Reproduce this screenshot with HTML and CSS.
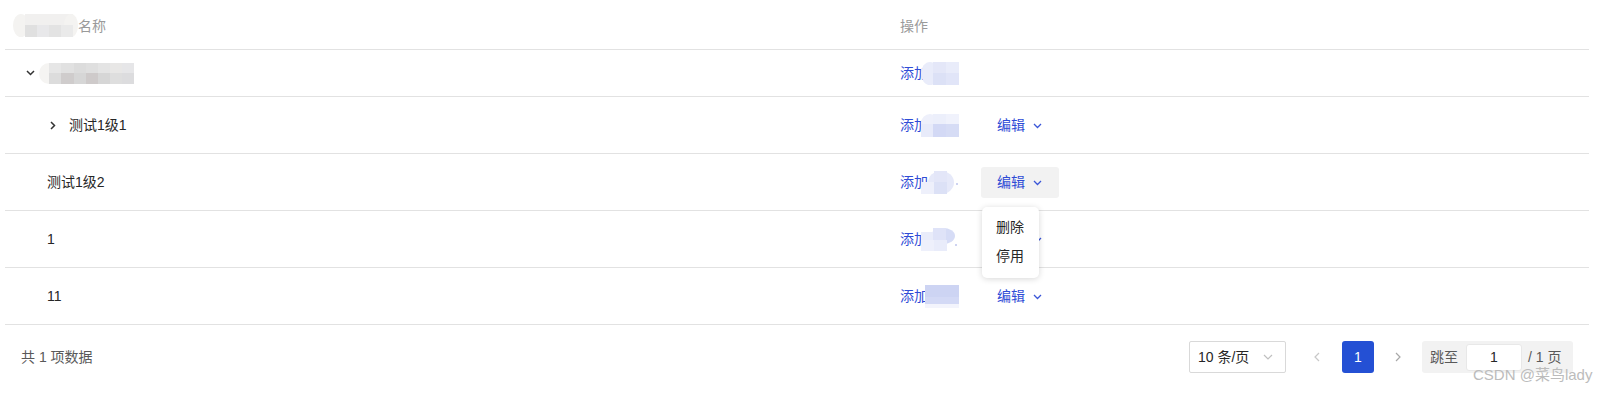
FILE: index.html
```html
<!DOCTYPE html>
<html lang="zh">
<head>
<meta charset="utf-8">
<title>Table</title>
<link rel="stylesheet" href="styles.css">
</head>
<body>
<div class="table">
  <div class="row head">
    <div class="cell name name-head">
      <svg class="mz mz-head" width="65" height="23" viewBox="0 0 65 23">
        <ellipse cx="8" cy="11.5" rx="8" ry="11.5" fill="#f4f3f1"/>
        <rect x="12" y="0" width="48" height="11" fill="#f1f0ef"/>
        <ellipse cx="58" cy="11.5" rx="7" ry="11.5" fill="#f4f3f1"/>
        <rect x="12" y="11" width="12" height="12" fill="#e0e0e0"/>
        <rect x="24" y="11" width="12" height="12" fill="#e8e8ea"/>
        <rect x="36" y="11" width="12" height="12" fill="#e3e3e3"/>
        <rect x="48" y="11" width="12" height="12" fill="#eaeaea"/>
      </svg>
      <span>名称</span>
    </div>
    <div class="cell ops">操作</div>
  </div>

  <div class="row r1">
    <div class="cell name name-r1">
      <svg class="caret" width="9" height="6" viewBox="0 0 9 6"><path d="M1 1 L4.5 4.5 L8 1" fill="none" stroke="#333" stroke-width="1.5"/></svg>
      <svg class="mz mz-r1" width="95" height="21" viewBox="0 0 95 21">
        <ellipse cx="10" cy="10.5" rx="10" ry="10.5" fill="#f5f4f2"/>
        <rect x="10" y="0" width="12" height="10" fill="#e6e6e6"/>
        <rect x="22" y="0" width="13" height="10" fill="#e1e1e1"/>
        <rect x="35" y="0" width="12" height="10" fill="#dcdcdc"/>
        <rect x="47" y="0" width="12" height="10" fill="#dfdfdf"/>
        <rect x="59" y="0" width="12" height="10" fill="#e4e4e4"/>
        <rect x="71" y="0" width="12" height="10" fill="#e8e7e6"/>
        <rect x="83" y="0" width="12" height="10" fill="#e6e6e8"/>
        <rect x="10" y="10" width="12" height="11" fill="#dcdcdc"/>
        <rect x="22" y="10" width="13" height="11" fill="#cfcccc"/>
        <rect x="35" y="10" width="12" height="11" fill="#d6d6d6"/>
        <rect x="47" y="10" width="12" height="11" fill="#cecaca"/>
        <rect x="59" y="10" width="12" height="11" fill="#d6d6d6"/>
        <rect x="71" y="10" width="12" height="11" fill="#dedede"/>
        <rect x="83" y="10" width="12" height="11" fill="#dcdcde"/>
      </svg>
    </div>
    <div class="cell ops">
      <span class="add"><span class="link">添加</span><svg class="mz mz-op" width="38" height="23" viewBox="0 0 38 23"><ellipse cx="9" cy="11.5" rx="9" ry="11.5" fill="#e9ecfa"/><rect x="12" y="0" width="13" height="11" fill="#e4e7f8"/><rect x="25" y="0" width="13" height="11" fill="#e9ecfa"/><rect x="12" y="11" width="13" height="12" fill="#dce1f6"/><rect x="25" y="11" width="13" height="12" fill="#e1e5f8"/></svg></span>
    </div>
  </div>

  <div class="row">
    <div class="cell name name-r2">
      <svg class="caret-r" width="6" height="9" viewBox="0 0 6 9"><path d="M1 1 L4.5 4.5 L1 8" fill="none" stroke="#333" stroke-width="1.5"/></svg>
      <span>测试1级1</span>
    </div>
    <div class="cell ops">
      <span class="add"><span class="link">添加</span><svg class="mz mz-op" width="38" height="23" viewBox="0 0 38 23"><ellipse cx="9" cy="9" rx="9" ry="9" fill="#eef0fb"/><rect x="12" y="0" width="13" height="10" fill="#eceffb"/><rect x="25" y="0" width="13" height="10" fill="#f0f2fc"/><rect x="0" y="10" width="12" height="13" fill="#e8ebfa"/><rect x="12" y="10" width="13" height="13" fill="#d3d9f5"/><rect x="25" y="10" width="13" height="13" fill="#d6dcf5"/></svg></span>
      <span class="edit"><span class="link">编辑</span><svg class="ecaret" width="9" height="6" viewBox="0 0 9 6"><path d="M1 1 L4.5 4.5 L8 1" fill="none" stroke="#3a56d8" stroke-width="1.3"/></svg></span>
    </div>
  </div>

  <div class="row">
    <div class="cell name name-leaf"><span>测试1级2</span></div>
    <div class="cell ops">
      <span class="add"><span class="link">添加</span><svg class="mz mz-op" width="38" height="23" viewBox="0 0 38 23"><ellipse cx="20" cy="11.5" rx="13" ry="11.5" fill="#e6e9f9"/><rect x="0" y="11" width="13" height="12" fill="#eef0fb"/><rect x="13" y="0" width="13" height="11" fill="#e3e6f8"/><rect x="13" y="11" width="13" height="12" fill="#dce1f6"/><circle cx="36" cy="13" r="0.8" fill="#8f9ce0"/></svg></span>
      <span class="edit hover"><span class="link">编辑</span><svg class="ecaret" width="9" height="6" viewBox="0 0 9 6"><path d="M1 1 L4.5 4.5 L8 1" fill="none" stroke="#3a56d8" stroke-width="1.3"/></svg>
        <div class="menu">
          <div class="menu-item">删除</div>
          <div class="menu-item">停用</div>
        </div>
      </span>
    </div>
  </div>

  <div class="row">
    <div class="cell name name-leaf"><span>1</span></div>
    <div class="cell ops">
      <span class="add"><span class="link">添加</span><svg class="mz mz-op" width="38" height="23" viewBox="0 0 38 23"><ellipse cx="22" cy="8" rx="12" ry="8" fill="#d6dcf6"/><rect x="0" y="4" width="12" height="10" fill="#e9ecfa"/><rect x="12" y="0" width="13" height="12" fill="#dfe3f8"/><rect x="0" y="12" width="13" height="11" fill="#eef0fb"/><rect x="13" y="12" width="13" height="11" fill="#e9ecfa"/><circle cx="35" cy="17" r="0.8" fill="#8f9ce0"/></svg></span>
      <span class="edit"><span class="edit-gap"></span><svg class="ecaret" width="9" height="6" viewBox="0 0 9 6"><path d="M1 1 L4.5 4.5 L8 1" fill="none" stroke="#3a56d8" stroke-width="1.3"/></svg></span>
    </div>
  </div>

  <div class="row">
    <div class="cell name name-leaf"><span>11</span></div>
    <div class="cell ops">
      <span class="add"><span class="link">添加</span><svg class="mz mz-op" width="38" height="23" viewBox="0 0 38 23"><rect x="4" y="0" width="34" height="12" fill="#cdd4f3"/><rect x="4" y="12" width="34" height="7" fill="#d3d9f5"/><rect x="4" y="19" width="34" height="4" fill="#f3f4fc"/></svg></span>
      <span class="edit"><span class="link">编辑</span><svg class="ecaret" width="9" height="6" viewBox="0 0 9 6"><path d="M1 1 L4.5 4.5 L8 1" fill="none" stroke="#3a56d8" stroke-width="1.3"/></svg></span>
    </div>
  </div>
</div>

<div class="footer">
  <div class="total">共 1 项数据</div>
  <div class="pager">
    <div class="select"><span>10 条/页</span><svg class="scaret" width="10" height="6" viewBox="0 0 10 6"><path d="M1 1 L5 5 L9 1" fill="none" stroke="#bfbfbf" stroke-width="1.2"/></svg></div>
    <div class="pbtn"><svg width="6" height="10" viewBox="0 0 6 10"><path d="M5 1 L1 5 L5 9" fill="none" stroke="#c8c8c8" stroke-width="1.2"/></svg></div>
    <div class="page active">1</div>
    <div class="pbtn"><svg width="6" height="10" viewBox="0 0 6 10"><path d="M1 1 L5 5 L1 9" fill="none" stroke="#a8a8a8" stroke-width="1.2"/></svg></div>
    <div class="jump"><span>跳至</span><div class="jinput">1</div><span class="jtotal">/ 1 页</span></div>
  </div>
</div>
<div class="watermark">CSDN @菜鸟lady</div>
</body>
</html>
```

FILE: styles.css
```css
* { box-sizing: border-box; }
html, body { margin: 0; padding: 0; }
body {
  width: 1608px;
  height: 394px;
  overflow: hidden;
  position: relative;
  background: #fff;
  font-family: "Liberation Sans", "Noto Sans CJK SC", sans-serif;
  font-size: 14px;
  line-height: 20px;
  color: #262626;
}
.table { margin-left: 5px; width: 1584px; }
.row {
  display: grid;
  grid-template-columns: 895px 1fr;
  align-items: center;
  height: 57px;
  border-bottom: 1px solid #e2e2e2;
}
.row.head { height: 50px; padding-top: 2px; color: #9a9a9a; }
.row.r1 { height: 47px; }
.cell { display: flex; align-items: center; }
.mz { display: block; flex: none; }
.name-head { padding-left: 8px; }
.name-r1 { padding-left: 21px; }
.name-r1 .caret { margin-right: 4px; }
.name-r2 { padding-left: 45px; }
.name-r2 .caret-r { margin-right: 13px; }
.name-leaf { padding-left: 42px; }
.ops { position: relative; }
.add { display: flex; align-items: center; width: 61px; }
.add .mz { margin-left: -7px; }
.link { color: #2f4cd6; }
.edit {
  position: relative;
  display: flex;
  align-items: center;
  width: 78px;
  height: 31px;
  margin-left: 20px;
  padding-left: 16px;
  border-radius: 3px;
}
.edit-gap { width: 28px; height: 20px; }
.edit.hover { background: #f2f2f2; }
.ecaret { margin-left: 8px; margin-top: 1px; }
.menu {
  position: absolute;
  left: 1px;
  top: 40px;
  width: 57px;
  padding: 6px 0 7px 14px;
  background: #fff;
  border-radius: 5px;
  box-shadow: 0 1px 6px rgba(0, 0, 0, 0.16);
  z-index: 5;
}
.menu-item { line-height: 29px; color: #262626; }
.footer {
  display: flex;
  align-items: center;
  width: 1573px;
  padding: 16px 0 0 21px;
}
.total { color: #595959; }
.pager { display: flex; align-items: center; margin-left: auto; }
.select {
  display: flex;
  align-items: center;
  width: 97px;
  height: 32px;
  padding: 0 12px 0 8px;
  border: 1px solid #d9d9d9;
  border-radius: 2px;
  color: #262626;
}
.scaret { margin-left: auto; }
.pbtn {
  width: 32px;
  height: 32px;
  display: flex;
  align-items: center;
  justify-content: center;
}
.select + .pbtn { margin-left: 15px; }
.page {
  width: 32px;
  height: 32px;
  margin: 0 8px 0 9px;
  border-radius: 3px;
  display: flex;
  align-items: center;
  justify-content: center;
}
.page.active { background: #2450d4; color: #fff; }
.jump {
  display: flex;
  align-items: center;
  height: 32px;
  width: 151px;
  margin-left: 8px;
  padding: 0 8px;
  background: #f2f2f2;
  border-radius: 3px;
  color: #595959;
}
.jinput {
  width: 56px;
  height: 27px;
  margin: 0 6px 0 8px;
  background: #fff;
  border: 1px solid #e8e8e8;
  border-radius: 3px;
  display: flex;
  align-items: center;
  justify-content: center;
  color: #262626;
}
.watermark {
  position: absolute;
  left: 1473px;
  top: 366px;
  font-size: 15px;
  line-height: 18px;
  color: #bcbcbc;
  white-space: nowrap;
}
```
